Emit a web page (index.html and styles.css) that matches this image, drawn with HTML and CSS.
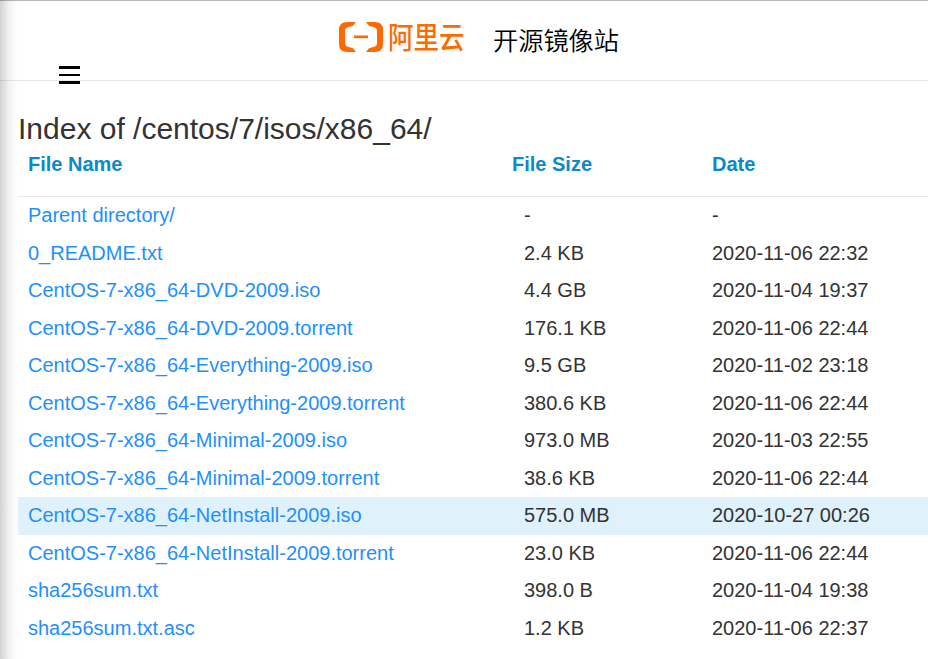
FILE: index.html
```html
<!DOCTYPE html>
<html lang="zh-CN">
<head>
<meta charset="utf-8">
<title>centos/7/isos/x86_64</title>
<link rel="stylesheet" href="styles.css">
</head>
<body>
<header class="header">
  <a class="brand">
    <svg class="mark" viewBox="0 0 44 30" width="44" height="30" fill="#ff6a00">
      <path d="M17 0H8Q0 0 0 8V22Q0 30 8 30H17L14 26.300L8 24.500Q6 23.700 6 21.500V8.500Q6 6.300 8 5.500L14 3.700Z"/>
      <path d="M27 0H36Q44 0 44 8V22Q44 30 36 30H27L30 26.300L36 24.500Q38 23.700 38 21.500V8.500Q38 6.300 36 5.500L30 3.700Z"/>
      <path d="M15 13.500H29V16.200H15Z"/>
    </svg>
    <span class="brand-name">阿里云</span>
  </a>
  <span class="site-name">开源镜像站</span>
  <div class="menu"><i class="bar"></i><i class="bar thin"></i><i class="bar"></i></div>
</header>
<main class="content">
  <h1 class="title">Index of /centos/7/isos/x86_64/</h1>
  <table class="list">
    <colgroup><col class="col-name"><col class="col-size"><col class="col-date"></colgroup>
    <thead><tr><th>File Name</th><th>File Size</th><th>Date</th></tr></thead>
    <tbody>
      <tr><td><a>Parent directory/</a></td><td class="size">-</td><td>-</td></tr>
      <tr><td><a>0_README.txt</a></td><td class="size">2.4 KB</td><td>2020-11-06 22:32</td></tr>
      <tr><td><a>CentOS-7-x86_64-DVD-2009.iso</a></td><td class="size">4.4 GB</td><td>2020-11-04 19:37</td></tr>
      <tr><td><a>CentOS-7-x86_64-DVD-2009.torrent</a></td><td class="size">176.1 KB</td><td>2020-11-06 22:44</td></tr>
      <tr><td><a>CentOS-7-x86_64-Everything-2009.iso</a></td><td class="size">9.5 GB</td><td>2020-11-02 23:18</td></tr>
      <tr><td><a>CentOS-7-x86_64-Everything-2009.torrent</a></td><td class="size">380.6 KB</td><td>2020-11-06 22:44</td></tr>
      <tr><td><a>CentOS-7-x86_64-Minimal-2009.iso</a></td><td class="size">973.0 MB</td><td>2020-11-03 22:55</td></tr>
      <tr><td><a>CentOS-7-x86_64-Minimal-2009.torrent</a></td><td class="size">38.6 KB</td><td>2020-11-06 22:44</td></tr>
      <tr class="active"><td><a>CentOS-7-x86_64-NetInstall-2009.iso</a></td><td class="size">575.0 MB</td><td>2020-10-27 00:26</td></tr>
      <tr><td><a>CentOS-7-x86_64-NetInstall-2009.torrent</a></td><td class="size">23.0 KB</td><td>2020-11-06 22:44</td></tr>
      <tr><td><a>sha256sum.txt</a></td><td class="size">398.0 B</td><td>2020-11-04 19:38</td></tr>
      <tr><td><a>sha256sum.txt.asc</a></td><td class="size">1.2 KB</td><td>2020-11-06 22:37</td></tr>
    </tbody>
  </table>
</main>
<div class="edge-shadow"></div>
</body>
</html>
```
FILE: styles.css
```css
* { box-sizing: border-box; }
body {
  margin: 0;
  height: 659px;
  overflow: hidden;
  background: #fff;
  color: #333;
  font-family: "Liberation Sans", "Noto Sans CJK SC", sans-serif;
  font-size: 20px;
}
.header {
  position: relative;
  display: flex;
  align-items: flex-start;
  height: 81px;
  padding: 21px 0 0 339px;
  border-top: 1px solid #b8b8b8;
  border-bottom: 1px solid #e8e8e8;
}
.brand { display: flex; width: 154px; }
.mark { display: block; flex: none; }
.brand-name {
  margin-left: 5px;
  color: #ff6a00;
  font: 500 25.500px/26px "Noto Sans CJK SC", sans-serif;
  height: 26px;
  transform: scaleY(1.15);
  white-space: nowrap;
}
.site-name {
  color: #000;
  font: 350 25.200px/34px "Noto Sans CJK SC", sans-serif;
}
.menu {
  position: absolute;
  left: 59px;
  top: 65px;
  width: 21px;
  height: 18px;
  display: flex;
  flex-direction: column;
  justify-content: space-between;
}
.bar { height: 3px; background: #000; }
.thin { height: 2px; }
.content { padding: 30px 0 0 18px; }
.title { margin: 0; font-size: 30px; line-height: 36px; font-weight: 400; }
.list { width: 910px; table-layout: fixed; border-collapse: separate; border-spacing: 0; }
.col-name { width: 484px; }
.col-size { width: 200px; }
th {
  height: 50px;
  padding: 2px 10px 0;
  border-bottom: 1px solid #e8e8e8;
  color: #088acb;
  font-weight: 700;
  line-height: 30px;
  text-align: left;
  vertical-align: top;
}
td { height: 37.5px; padding: 0 10px; line-height: 37.5px; }
.size { padding-left: 22px; }
td a { color: #1e8fff; }
.active { background: #dff1fb; }
.edge-shadow {
  position: absolute;
  left: 0;
  top: 0;
  width: 18px;
  height: 659px;
  background: linear-gradient(90deg, rgba(0,0,0,.18), rgba(0,0,0,.05) 50%, transparent);
}
```
